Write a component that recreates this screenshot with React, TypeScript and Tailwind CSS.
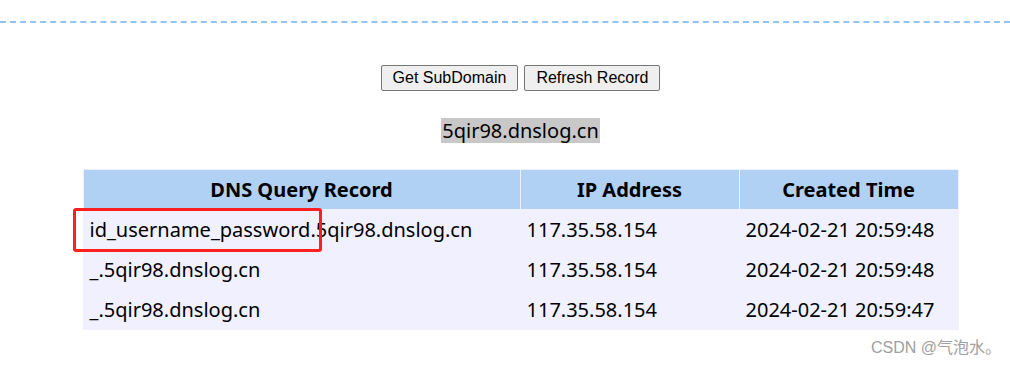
import React from 'react';

const rows = [
  { domain: 'id_username_password.5qir98.dnslog.cn', ip: '117.35.58.154', time: '2024-02-21 20:59:48' },
  { domain: '_.5qir98.dnslog.cn', ip: '117.35.58.154', time: '2024-02-21 20:59:48' },
  { domain: '_.5qir98.dnslog.cn', ip: '117.35.58.154', time: '2024-02-21 20:59:47' },
];

const uiFont = { fontFamily: '"Noto Sans", "Open Sans", "Noto Sans CJK SC", sans-serif' };

export default function App() {
  return (
    <div className="relative h-[365px] w-[1010px] overflow-hidden bg-white text-black">
      <div className="pt-[21px]">
        <div className="h-[2px] w-full border-t-2 border-dashed border-[#90c4f2]" />
      </div>

      <div className="flex flex-col items-center pl-[31px]">
        <div className="mt-[42px] flex gap-[6px] font-['Liberation_Sans',Arial,sans-serif] text-[16px]">
          <button className="h-[26px] rounded-[2px] border border-[#767676] bg-[#efefef] px-[11px] leading-none">
            Get SubDomain
          </button>
          <button className="h-[26px] rounded-[2px] border border-[#767676] bg-[#efefef] px-[11px] leading-none">
            Refresh Record
          </button>
        </div>

        <div className="mt-[27px] bg-[#c8c8c8] px-[1px] text-[20px] leading-[25px]" style={uiFont}>
          5qir98.dnslog.cn
        </div>

        <table
          className="mt-[26px] w-[876px] border-separate border-spacing-[1px] bg-[#f0f0ff] text-[20px]"
          style={uiFont}
        >
          <thead>
            <tr>
              <th className="h-[39px] w-[436px] bg-[#b0d0f4] font-bold">DNS Query Record</th>
              <th className="h-[39px] w-[218px] bg-[#b0d0f4] font-bold">IP Address</th>
              <th className="h-[39px] bg-[#b0d0f4] font-bold">Created Time</th>
            </tr>
          </thead>
          <tbody>
            {rows.map((r, i) => (
              <tr key={i}>
                <td className="h-[39px] px-[6px] text-left">{r.domain}</td>
                <td className="h-[39px] px-[6px] text-left">{r.ip}</td>
                <td className="h-[39px] px-[6px] text-left">{r.time}</td>
              </tr>
            ))}
          </tbody>
        </table>
      </div>

      {/* annotation box */}
      <div className="absolute left-[73px] top-[208px] h-[44px] w-[249px] rounded-[3px] border-[3px] border-[#ff1f1f]" />

      <div
        className="absolute right-[9px] top-[336px] text-[16px] text-[#a0a0a0]"
        style={{ fontFamily: '"Liberation Sans", "Noto Sans CJK SC", sans-serif' }}
      >
        CSDN @气泡水。
      </div>
    </div>
  );
}
